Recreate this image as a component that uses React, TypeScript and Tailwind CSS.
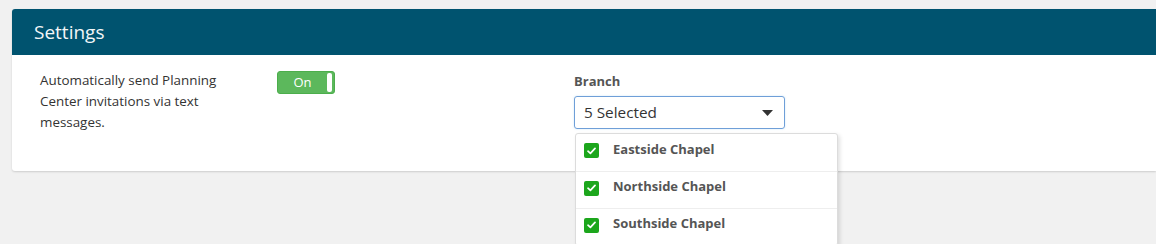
import { useState } from "react";

const branches = ["Eastside Chapel", "Northside Chapel", "Southside Chapel"];

function Check() {
  return (
    <span className="mt-[2px] flex h-[15px] w-[15px] shrink-0 items-center justify-center rounded-[2px] bg-[#1ca61c]">
      <svg width="9" height="8" viewBox="0 0 9 8" fill="none">
        <path d="M1 4.2 3.4 6.4 8 1.4" stroke="white" strokeWidth="1.7" strokeLinecap="round" strokeLinejoin="round" />
      </svg>
    </span>
  );
}

export default function App() {
  const [on, setOn] = useState(true);

  return (
    <div
      className="h-[244px] w-full overflow-hidden bg-[#f1f1f1] pl-[12px] pt-[9px]"
      style={{ fontFamily: "'Open Sans', 'Liberation Sans', sans-serif" }}
    >
      {/* Settings card */}
      <div className="rounded-l-[3px] bg-white shadow-[0_1px_2px_rgba(0,0,0,0.15)]">
        <div className="flex h-[46px] items-center rounded-tl-[3px] bg-[#00536f] pl-[22px]">
          <h2 className="text-[19px] font-normal text-[#f2f6f8]">Settings</h2>
        </div>

        <div className="flex h-[116px] pl-[28px] pt-[15px]">
          <p className="w-[237px] pr-[36px] text-[13.4px] leading-[21px] text-[#333]">
            Automatically send Planning Center invitations via text messages.
          </p>

          <div className="w-[297px] pt-[1px]">
            <button
              onClick={() => setOn(!on)}
              className="flex h-[23px] w-[58px] items-center rounded-[3px] border border-[#4cae4c] bg-[#5cb85c] pr-[2px]"
            >
              <span className="flex-1 text-center text-[13px] leading-none text-white">{on ? "On" : "Off"}</span>
              <span className="h-[19px] w-[5px] rounded-[2px] bg-white" />
            </button>
          </div>

          <div>
            <label className="block pt-[2px] text-[13px] font-bold leading-[18px] text-[#555]">Branch</label>
            <div className="relative mt-[6px]">
              <div className="flex h-[33px] w-[211px] items-center justify-between rounded-[3px] border border-[#6f9fd8] pl-[9px] pr-[11px] shadow-[0_0_2px_rgba(102,175,233,0.35)]">
                <span className="text-[15.3px] text-[#333]">5 Selected</span>
                <svg width="11" height="6" viewBox="0 0 11 6">
                  <path d="M0 0h11L5.5 6z" fill="#333" />
                </svg>
              </div>

              {/* Dropdown */}
              <div className="absolute left-[1px] top-full z-10 mt-[4px] w-[263px] rounded-[3px] border border-[#dcdcdc] bg-white shadow-[2px_2px_4px_rgba(0,0,0,0.12)]">
                {branches.map((b, i) => (
                  <div
                    key={b}
                    className={`flex h-[37px] items-center gap-[14px] pb-[6px] pl-[8px] ${i > 0 ? "border-t border-[#eee]" : ""}`}
                  >
                    <Check />
                    <span className="text-[13px] font-bold text-[#555]">{b}</span>
                  </div>
                ))}
              </div>
            </div>
          </div>
        </div>
      </div>
    </div>
  );
}
